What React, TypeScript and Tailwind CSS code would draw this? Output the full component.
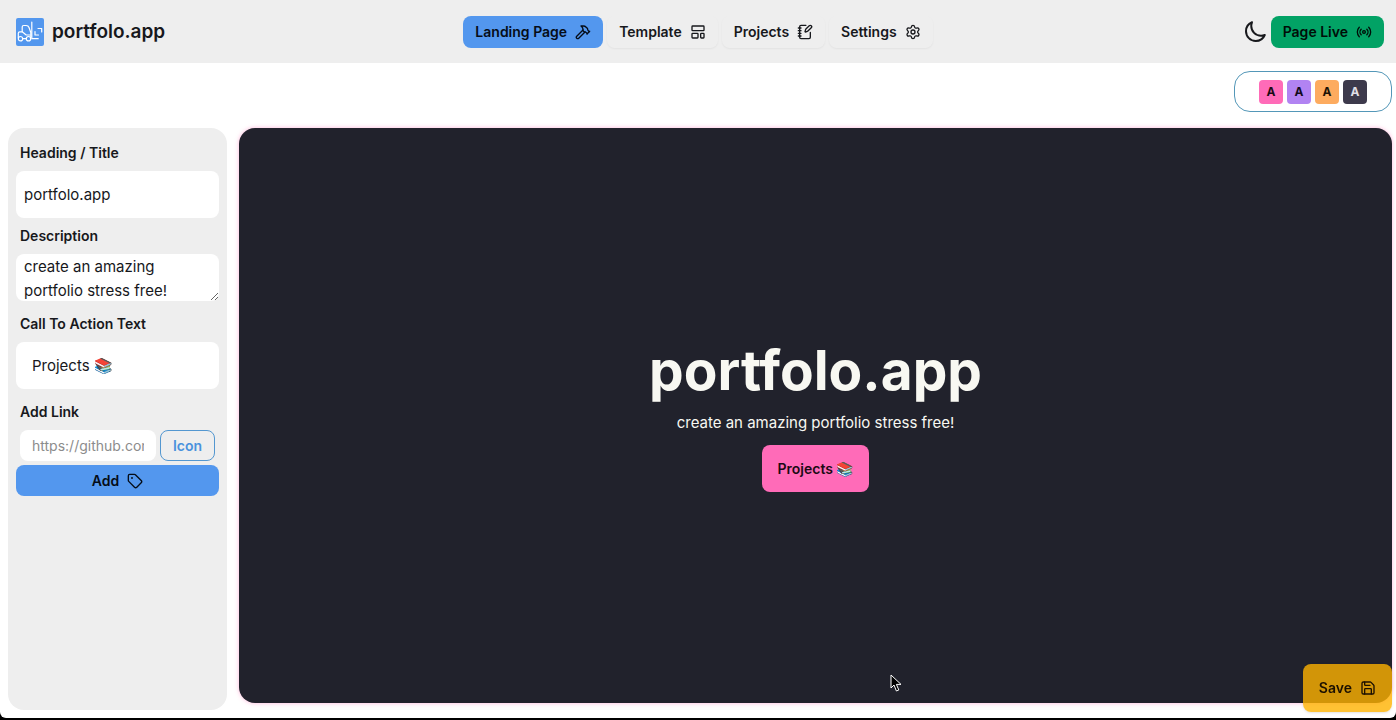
import clsx from 'clsx';
import {
  Hammer,
  LayoutTemplate,
  NotebookPen,
  Radio,
  Save,
  Settings,
  Tag,
} from 'lucide-react';
import type { LucideIcon } from 'lucide-react';
import { HiOutlineMoon } from 'react-icons/hi2';

interface INavItem {
  label: string;
  Icon: LucideIcon;
  active?: boolean;
}

const navItems: INavItem[] = [
  { label: 'Landing Page', Icon: Hammer, active: true },
  { label: 'Template', Icon: LayoutTemplate },
  { label: 'Projects', Icon: NotebookPen },
  { label: 'Settings', Icon: Settings },
];

const swatches = [
  { name: 'Pink theme', cls: 'bg-[#ff6bb8] text-[#1c0a14]' },
  { name: 'Purple theme', cls: 'bg-[#b183f2] text-[#120a1c]' },
  { name: 'Orange theme', cls: 'bg-[#fdab5f] text-[#1c1206]' },
  { name: 'Dark theme', cls: 'bg-[#3d3a4c] text-[#e0dfe6]' },
];

export default function App() {
  return (
    <div className="min-h-screen bg-black pb-0.5 font-['Inter',sans-serif] text-[#17181c]">
      <div className="flex min-h-[calc(100vh-2px)] flex-col overflow-hidden rounded-b-md bg-white">
        <Header />
        <div className="flex justify-end px-1 py-2">
          <ThemePicker />
        </div>
        <main className="flex flex-1 gap-3 pt-2 pr-1 pb-2 pl-2">
          <EditorPanel />
          <Preview />
        </main>
      </div>
      <button
        type="button"
        className="fixed right-1 bottom-2 flex h-12 items-center gap-2 rounded-lg bg-[#ffb300]/80 px-4 text-sm font-semibold text-[#1c1000] shadow-sm"
      >
        Save
        <Save size={16} />
      </button>
      <Cursor />
    </div>
  );
}

function Header() {
  return (
    <header className="grid h-[63px] grid-cols-[1fr_auto_1fr] items-center bg-[#eeeeee] px-3">
      <a
        href="#"
        className="flex items-center gap-2 pl-1 text-[19px] leading-8 font-semibold"
      >
        <Logo />
        portfolo.app
      </a>
      <nav className="flex gap-1">
        {navItems.map(({ label, Icon, active }) => (
          <button
            key={label}
            type="button"
            className={clsx(
              'flex h-8 items-center gap-2 rounded-lg px-3 text-sm font-semibold',
              active ? 'bg-[#5397ee] text-[#050d18]' : 'shadow-xs'
            )}
          >
            {label}
            <Icon size={16} />
          </button>
        ))}
      </nav>
      <div className="flex items-center justify-end gap-1">
        <button type="button" aria-label="Toggle dark mode">
          <HiOutlineMoon size={24} strokeWidth={2} />
        </button>
        <button
          type="button"
          className="flex h-8 items-center gap-2 rounded-lg bg-[#02a265] px-3 text-sm font-semibold text-[#000e08]"
        >
          Page Live
          <Radio size={16} />
        </button>
      </div>
    </header>
  );
}

function Logo() {
  return (
    <svg
      aria-hidden="true"
      viewBox="0 0 28 28"
      className="size-7 rounded-xs bg-[#5397ee]"
      fill="none"
      stroke="#fff"
      strokeWidth="1.2"
      strokeLinecap="round"
      strokeLinejoin="round"
    >
      <circle cx="4.5" cy="20.7" r="2.2" />
      <circle cx="12.5" cy="20.7" r="2.2" />
      <path d="M6.7 20.7h3.6" />
      <path d="M2.3 19.5v-4.2a1.5 1.5 0 0 1 1.5-1.5h2.4l4 3.2h4" />
      <path d="M6.2 13.8V9a1.5 1.5 0 0 1 1.5-1.5h2.5a3 3 0 0 1 2.8 2l1.8 5v4.5" />
      <path d="M15.8 4v16.7h6.4" />
      <path d="M19 13.5V17h3.5M22 10.5h3.7V14" />
    </svg>
  );
}

function ThemePicker() {
  return (
    <div className="flex h-[41px] items-center gap-1 rounded-2xl border border-[#5397b8] px-6">
      {swatches.map(({ name, cls }) => (
        <button
          key={name}
          type="button"
          aria-label={name}
          className={clsx('size-6 rounded-sm text-xs font-bold', cls)}
        >
          A
        </button>
      ))}
    </div>
  );
}

function EditorPanel() {
  return (
    <form className="flex w-[219px] shrink-0 flex-col rounded-2xl bg-[#eeeeee] px-2 pt-[7px] text-[15px]">
      <FieldLabel htmlFor="title">Heading / Title</FieldLabel>
      <input
        id="title"
        defaultValue="portfolo.app"
        className="h-[47px] rounded-lg bg-white px-2"
      />
      <FieldLabel htmlFor="description">Description</FieldLabel>
      <textarea
        id="description"
        defaultValue="create an amazing portfolio stress free!"
        className="mb-[5px] h-[47px] overflow-hidden rounded-lg bg-white px-2 pt-px leading-6"
      />
      <FieldLabel htmlFor="cta">Call To Action Text</FieldLabel>
      <input
        id="cta"
        defaultValue="Projects 📚"
        className="mb-[5px] h-[47px] rounded-lg bg-white px-4"
      />
      <FieldLabel htmlFor="link">Add Link</FieldLabel>
      <div className="flex gap-1 px-1">
        <input
          id="link"
          placeholder="https://github.com"
          className="h-[31px] min-w-0 flex-1 rounded-lg bg-white px-3 text-sm placeholder:text-[#8c8c8c]"
        />
        <button
          type="button"
          className="h-[31px] rounded-lg border border-[#5397d0] px-3 text-sm font-semibold text-[#4a92dd]"
        >
          Icon
        </button>
      </div>
      <button
        type="button"
        className="mt-1 flex h-[31px] items-center justify-center gap-2 rounded-lg bg-[#5397ee] text-sm font-semibold text-[#050d18]"
      >
        Add
        <Tag size={16} />
      </button>
    </form>
  );
}

function FieldLabel({
  htmlFor,
  children,
}: {
  htmlFor: string;
  children: string;
}) {
  return (
    <label
      htmlFor={htmlFor}
      className="flex h-9 items-center px-1 text-sm font-semibold"
    >
      {children}
    </label>
  );
}

function Preview() {
  return (
    <section className="mb-[7px] flex flex-1 flex-col items-center justify-center rounded-2xl bg-[#21222c] text-[#f8f8f2] shadow-[0_0_4px_#ff6bb880]">
      <h1 className="text-[55px] leading-[62px] font-bold">portfolo.app</h1>
      <p className="pt-2.5 pb-1.5 text-[15px] leading-6">
        create an amazing portfolio stress free!
      </p>
      <button
        type="button"
        className="mt-1 h-[47px] rounded-lg bg-[#ff6bb8] px-4 text-sm font-semibold text-[#1c0a14]"
      >
        Projects 📚
      </button>
    </section>
  );
}

function Cursor() {
  return (
    <svg
      aria-hidden="true"
      viewBox="0 0 12 18"
      className="pointer-events-none fixed bottom-7 left-[890px] h-[18px] w-3"
    >
      <path
        d="M1 1v13l3-3 2.4 6 2.4-1-2.4-5.6H11z"
        fill="#000"
        stroke="#fff"
      />
    </svg>
  );
}
